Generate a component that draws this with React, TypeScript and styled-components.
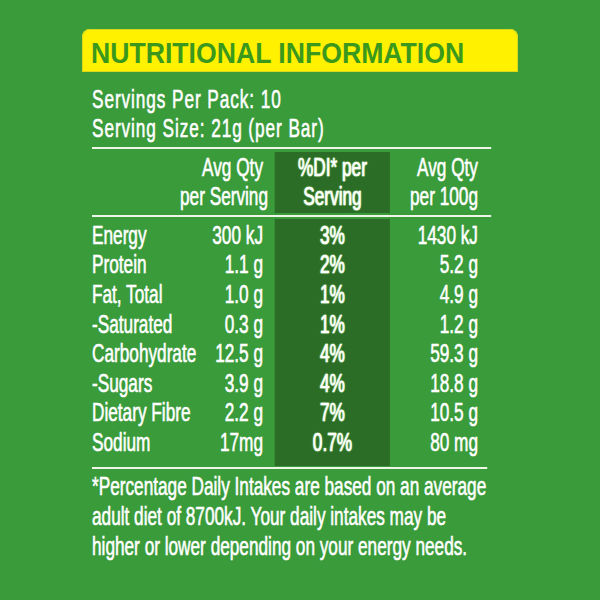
import React from "react";
import styled, { createGlobalStyle, css } from "styled-components";

const S = 0.662; // horizontal condensing of the body text block
const u = (px: number) => `${(px / S).toFixed(2)}px`;

const GREEN = "#3a9b3b";
const DARK = "#2b6d26";
const YELLOW = "#fff100";
const TITLE = "#3a991c";
const RULE = "#eef6e8";
const HALO = "#93d47d";

const GlobalStyle = createGlobalStyle`
  html, body { margin: 0; padding: 0; background: ${GREEN}; }
  #root { width: 600px; height: 600px; }
`;

const Page = styled.div`
  width: 600px;
  height: 600px;
  background: ${GREEN};
  overflow: hidden;
  padding: 29px 0 0 82px;
  box-sizing: border-box;
  font-family: "Liberation Sans", Arial, sans-serif;
  color: #ffffff;
`;

const Panel = styled.div`
  width: 436px;
`;

const Banner = styled.div`
  height: 43px;
  box-sizing: border-box;
  background: ${YELLOW};
  border-radius: 8px 8px 0 0;
  box-shadow: inset 0 0 0 1px #d7d81a;
  padding: 4px 0 0 9px;
`;

const Title = styled.h1`
  margin: 0;
  font-weight: 700;
  font-size: 29px;
  line-height: 40px;
  color: ${TITLE};
  white-space: nowrap;
  transform: scaleX(0.918);
  transform-origin: left top;
`;

const Body = styled.div`
  margin-left: 10px;
  width: ${u(399)};
  transform: scaleX(${S});
  transform-origin: left top;
  -webkit-text-stroke: 0.6px #ffffff;
`;

const Servings = styled.div`
  margin-top: 13px;
  font-size: 26px;
  line-height: 29px;
  letter-spacing: 1.4px;
  white-space: nowrap;
`;

const Rule = styled.div<{ $w: number; $mt: number }>`
  width: ${(p) => u(p.$w)};
  height: 2px;
  margin-top: ${(p) => p.$mt}px;
  background: ${RULE};
`;

const Table = styled.div<{ $pt: number; $pb: number }>`
  display: flex;
  width: ${u(399)};
  padding: ${(p) => p.$pt}px 0 ${(p) => p.$pb}px;
`;

const glow = css`
  text-shadow: 0 0 2px ${HALO}, 0 0 2px ${HALO}, 0 0 1px ${HALO};
`;

const Col = styled.div<{
  $w: number;
  $align: "left" | "right" | "center";
  $dark?: boolean;
  $ml?: number;
  $pt: number;
  $pb: number;
  $lh?: number;
}>`
  width: ${(p) => u(p.$w)};
  margin-left: ${(p) => u(p.$ml ?? 0)};
  text-align: ${(p) => p.$align};
  font-size: 26px;
  line-height: ${(p) => p.$lh ?? 29.6}px;
  white-space: nowrap;
  padding: ${(p) => p.$pt}px 0 ${(p) => p.$pb}px;
  background: ${(p) => (p.$dark ? DARK : "transparent")};
  ${(p) => p.$dark && glow}
`;

const Line = styled.div``;

const Footnote = styled.p`
  margin: 2px 0 0;
  font-size: 26px;
  line-height: 30px;
  white-space: nowrap;
`;

const rows: [string, string, string, string][] = [
  ["Energy", "300 kJ", "3%", "1430 kJ"],
  ["Protein", "1.1 g", "2%", "5.2 g"],
  ["Fat, Total", "1.0 g", "1%", "4.9 g"],
  ["-Saturated", "0.3 g", "1%", "1.2 g"],
  ["Carbohydrate", "12.5 g", "4%", "59.3 g"],
  ["-Sugars", "3.9 g", "4%", "18.8 g"],
  ["Dietary Fibre", "2.2 g", "7%", "10.5 g"],
  ["Sodium", "17mg", "0.7%", "80 mg"],
];

export default function App() {
  return (
    <>
      <GlobalStyle />
      <Page>
        <Panel>
          <Banner>
            <Title>NUTRITIONAL INFORMATION</Title>
          </Banner>
          <Body>
            <Servings>
              Servings Per Pack: 10
              <br />
              Serving Size: 21g (per Bar)
            </Servings>
            <Rule $w={399} $mt={4} />
            <Table $pt={3} $pb={2}>
              <Col $w={88} $align="left" $lh={29} $pt={0.5} $pb={2.5} />
              <Col $w={83} $align="right" $lh={29} $pt={0.5} $pb={2.5}>
                <Line>Avg Qty</Line>
                <Line>per Serving</Line>
              </Col>
              <Col $w={115} $ml={12} $align="center" $dark $lh={29} $pt={0.5} $pb={2.5}>
                <Line>%DI* per</Line>
                <Line>Serving</Line>
              </Col>
              <Col $w={88} $align="right" $lh={29} $pt={0.5} $pb={2.5}>
                <Line>Avg Qty</Line>
                <Line>per 100g</Line>
              </Col>
            </Table>
            <Rule $w={399} $mt={0} />
            <Table $pt={2} $pb={0}>
              <Col $w={88} $align="left" $pt={1.8} $pb={8.4}>
                {rows.map((r) => (
                  <Line key={r[0]}>{r[0]}</Line>
                ))}
              </Col>
              <Col $w={83} $align="right" $pt={1.8} $pb={8.4}>
                {rows.map((r) => (
                  <Line key={r[0]}>{r[1]}</Line>
                ))}
              </Col>
              <Col $w={115} $ml={12} $align="center" $dark $pt={1.8} $pb={8.4}>
                {rows.map((r) => (
                  <Line key={r[0]}>{r[2]}</Line>
                ))}
              </Col>
              <Col $w={88} $align="right" $pt={1.8} $pb={8.4}>
                {rows.map((r) => (
                  <Line key={r[0]}>{r[3]}</Line>
                ))}
              </Col>
            </Table>
            <Rule $w={395} $mt={1} />
            <Footnote>
              *Percentage Daily Intakes are based on an average
              <br />
              adult diet of 8700kJ. Your daily intakes may be
              <br />
              higher or lower depending on your energy needs.
            </Footnote>
          </Body>
        </Panel>
      </Page>
    </>
  );
}
